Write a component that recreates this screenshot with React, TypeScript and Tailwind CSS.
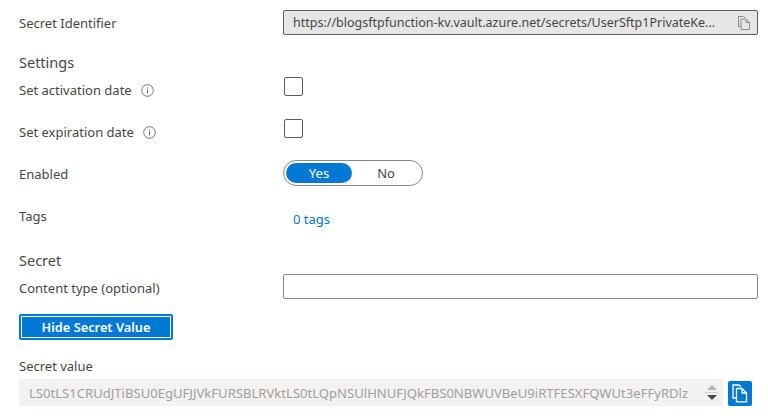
import React from "react";

function Info() {
  return (
    <svg width="13" height="13" viewBox="0 0 13 13" className="ml-[9px] shrink-0" fill="none">
      <circle cx="6.5" cy="6.5" r="5.8" stroke="#666" strokeWidth="0.9" />
      <rect x="6" y="5.6" width="1" height="3.8" fill="#666" />
      <rect x="6" y="3.5" width="1" height="1" fill="#666" />
    </svg>
  );
}

function CopySmall() {
  return (
    <svg width="12" height="14" viewBox="0 0 12 14" fill="none" stroke="#8a8a8a" strokeWidth="1">
      <path d="M2.5 10.5H.5V.5h5l1.5 1.5" />
      <path d="M3 3h5l3.500 3.500v7H3z" fill="#e6e6e6" />
      <path d="M8 3v3.500h3.500" />
    </svg>
  );
}

function CopyBig() {
  return (
    <svg width="16" height="19" viewBox="0 0 16 19" fill="none" stroke="#fff" strokeWidth="1.300">
      <path d="M4 14H1V1h6l2 2" />
      <path d="M4.500 4.500h5.500l4.500 4.500v8.800h-10z" />
      <path d="M10 4.500V9h4.500" />
    </svg>
  );
}

export default function App() {
  return (
    <div className="h-[416px] w-[768px] overflow-hidden bg-white pl-[19px] pr-[10px] text-[13px] leading-[18px] text-[#484644] [font-family:'Noto_Sans','Open_Sans',sans-serif]">
      <div className="mt-[10px] flex h-[25px] items-center pt-[10px]">
        <div className="w-[264px] shrink-0 pb-[10px]">Secret Identifier</div>
        <div className="mt-[-10px] flex h-[25px] w-[475px] items-center justify-between rounded-[2px] border border-[#605e5c] bg-[#e6e6e6] pl-[9px] pr-[7px]">
          <span className="whitespace-nowrap text-[12.500px]">https://blogsftpfunction-kv.vault.azure.net/secrets/UserSftp1PrivateKe...</span>
          <CopySmall />
        </div>
      </div>

      <div className="mt-[17px] text-[14.500px] leading-[20px]">Settings</div>

      <div className="mt-[9px] flex h-[18px] items-center">
        <div className="flex w-[265px] shrink-0 items-center">Set activation date<Info /></div>
        <div className="mt-[-8px] h-[19px] w-[19px] rounded-[2px] border border-[#605e5c] bg-white" />
      </div>

      <div className="mt-[24px] flex h-[18px] items-center">
        <div className="flex w-[265px] shrink-0 items-center">Set expiration date<Info /></div>
        <div className="mt-[-8px] h-[19px] w-[19px] rounded-[2px] border border-[#605e5c] bg-white" />
      </div>

      <div className="mt-[20px] flex h-[26px] items-center">
        <div className="w-[264px] shrink-0">Enabled</div>
        <div className="mt-[-2px] flex h-[26px] w-[140px] items-center rounded-full border border-[#8a8886] p-[2px]">
          <div className="flex h-[20px] w-[66px] items-center justify-center rounded-full bg-[#0078d4] text-white">Yes</div>
          <div className="flex h-[20px] flex-1 items-center justify-center">No</div>
        </div>
      </div>

      <div className="mt-[20px] flex items-start">
        <div className="w-[274px] shrink-0">Tags</div>
        <div className="mt-[3px] text-[#0078d4]">0 tags</div>
      </div>

      <div className="mt-[22px] text-[14.500px] leading-[20px]">Secret</div>

      <div className="mt-[4px] flex h-[25px] items-center">
        <div className="w-[264px] shrink-0 pt-[2px]">Content type (optional)</div>
        <div className="h-[25px] w-[475px] rounded-[2px] border border-[#8a8886] bg-white" />
      </div>

      <div className="mt-[15px] flex h-[26px] w-[154px] items-center justify-center rounded-[2px] border-[2px] border-[#0078d4] bg-[#0078d4] text-[12.800px] font-semibold text-white outline outline-1 -outline-offset-3 outline-white">
        Hide Secret Value
      </div>

      <div className="mt-[17px]">Secret value</div>

      <div className="mt-[4px] flex items-center">
        <div className="flex h-[27px] w-[704px] items-center justify-between rounded-[2px] bg-[#f3f2f1] pl-[10px] pr-[5px] text-[#a19f9d]">
          <span className="whitespace-nowrap text-[13.080px]">LS0tLS1CRUdJTiBSU0EgUFJJVkFURSBLRVktLS0tLQpNSUlHNUFJQkFBS0NBWUVBeU9iRTFESXFQWUt3eFFyRDlz</span>
          <div className="flex flex-col items-center gap-[2px]">
            <div className="h-0 w-0 border-x-[5px] border-b-[5px] border-x-transparent border-b-[#b5b3b1]" />
            <div className="h-px w-[13px] bg-[#d2d0ce]" />
            <div className="h-0 w-0 border-x-[5px] border-t-[5px] border-x-transparent border-t-[#484644]" />
          </div>
        </div>
        <div className="ml-[5px] mt-[2px] flex h-[25px] w-[24px] items-center justify-center rounded-[2px] bg-[#0078d4]">
          <CopyBig />
        </div>
      </div>
    </div>
  );
}
